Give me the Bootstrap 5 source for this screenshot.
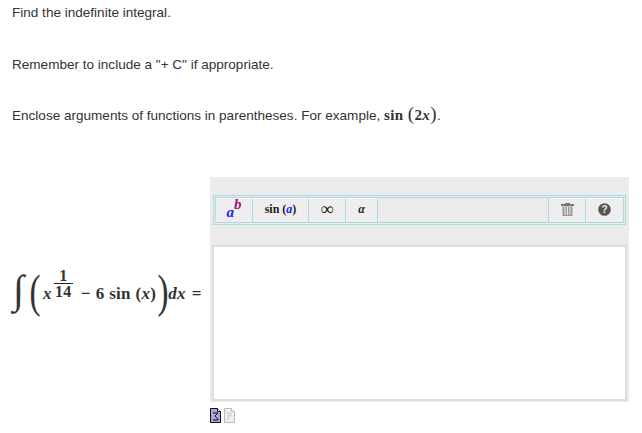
<!DOCTYPE html>
<html lang="en">
<head>
  <meta charset="UTF-8">
  <title>Indefinite integral</title>
  <link href="https://cdn.jsdelivr.net/npm/bootstrap@5.3.0/dist/css/bootstrap.min.css" rel="stylesheet">
  <style>
    body {
      background: #fff;
      color: #333;
      font-family: "Liberation Sans", Arial, sans-serif;
      font-size: 13.55px;
      line-height: 20px;
      overflow: hidden;
    }
    .page-wrap { padding: 3px 12px 0 12px; width: 642px; }
    .prompt-line { margin: 0 0 32px 0; height: 20px; white-space: nowrap; }
    .prompt-tight { margin-bottom: 29px; }
    .tex { font-family: "Liberation Serif", serif; color: #222; }
    .tex-inline { font-size: 15px; font-weight: 700; line-height: 1; letter-spacing: .4px; color: #333; }
    .tex-big { font-size: 19px; font-weight: 400; line-height: 1; }
    .answer-row { margin-top: 53px; margin-left: -12px; }
    .math-col { width: 210px; height: 225px; padding: 87px 0 0 13px; }
    .math-line { font-size: 17px; font-weight: 700; height: 60px; white-space: nowrap; letter-spacing: .3px; color: #333; }
    .tex-int { font-size: 40px; font-weight: 400; font-style: italic; width: 14px; margin-top: -8px; }
    .tex-paren { font-size: 46px; font-weight: 400; line-height: 48px; transform: scaleX(.72); width: 11px; margin-top: -5px; }
    .tex-paren-open { margin-left: 1px; margin-right: 4px; }
    .tex-paren-close { margin-right: 1px; }
    .tex-frac { width: 19px; margin: -21px 8px 0 2px; line-height: 16px; }
    .tex-num { border-bottom: 1px solid #222; text-align: center; font-size: 16px; height: 15px; line-height: 14px; }
    .tex-den { text-align: center; font-size: 16px; height: 15px; line-height: 15px; }
    .tex-minus { margin-right: 5px; }
    .tex-eq { margin-left: 6px; }
    .editor-panel { width: 419px; height: 225px; background: #ebebeb; padding: 18px 3px 2px 3px; }
    .tool-outer { border: 1px solid #add8e6; padding: 1px; height: 30px; }
    .tool-inner { height: 26px; border: 1px solid #add8e6; background: #eee; }
    .tool-btn { height: 100%; border-right: 1px solid #add8e6; border-top: 1px solid #f8f8f8; font-family: "Liberation Serif", serif; font-weight: 700; color: #222; font-size: 12px; padding-bottom: 2px; }
    .tool-txt { padding-bottom: 4px; }
    .tool-btn.last-btn { border-right: 0; }
    .tool-spacer { border-right: 1px solid #add8e6; height: 100%; background: #ebebeb; }
    .tool-w37 { width: 37px; }
    .tool-w56 { width: 56px; }
    .tool-w32 { width: 32px; }
    .var-a { color: #2222ee; font-style: italic; }
    .var-b { color: #a0157a; font-style: italic; }
    .sup-b { font-size: 15px; position: relative; top: -5px; }
    .base-a { font-size: 15px; position: relative; top: 3px; }
    .infty-glyph { font-size: 18px; font-weight: 400; }
    .editor-box { height: 156px; margin-top: 20px; background: #fff; border: 2px solid #ddd; margin-left: -1px; margin-right: -1px; }
    .file-icons { margin: 6px 0 0 198px; gap: 3px; }
  </style>
</head>
<body>
<div class="page-wrap">
  <p class="prompt-line">Find the indefinite integral.</p>
  <p class="prompt-line prompt-tight">Remember to include a "+ C" if appropriate.</p>
  <p class="prompt-line">Enclose arguments of functions in parentheses. For example, <span class="tex tex-inline">sin <span class="tex-big">(</span>2<i>x</i><span class="tex-big">)</span></span>.</p>

  <div class="answer-row d-flex">
    <div class="math-col">
      <div class="math-line tex d-flex align-items-center">
        <span class="tex-int">∫</span>
        <span class="tex-paren tex-paren-open">(</span>
        <i>x</i>
        <span class="tex-frac">
          <div class="tex-num">1</div>
          <div class="tex-den">14</div>
        </span>
        <span class="tex-minus">−</span>
        <span>6 sin (<i>x</i>)</span>
        <span class="tex-paren tex-paren-close">)</span>
        <span><i>dx</i></span>
        <span class="tex-eq">=</span>
      </div>
    </div>
    <div class="editor-panel">
      <div class="tool-outer">
        <div class="tool-inner d-flex">
          <div class="tool-btn tool-txt tool-w37 d-flex align-items-center justify-content-center"><span class="var-a base-a">a</span><span class="var-b sup-b">b</span></div>
          <div class="tool-btn tool-txt tool-w56 d-flex align-items-center justify-content-center"><span>sin&nbsp;(<span class="var-a">a</span>)</span></div>
          <div class="tool-btn tool-txt tool-w37 d-flex align-items-center justify-content-center"><span class="infty-glyph">∞</span></div>
          <div class="tool-btn tool-txt tool-w32 d-flex align-items-center justify-content-center"><i>α</i></div>
          <div class="tool-spacer flex-grow-1"></div>
          <div class="tool-btn tool-w37 d-flex align-items-center justify-content-center">
            <svg width="13" height="13" viewBox="0 0 13 13"><rect x="0" y="1" width="13" height="2" fill="#777"/><rect x="4" y="0" width="5" height="1" fill="#777"/><path d="M1.5 3.5h10V13h-10z" fill="#999"/><path d="M4 4v8M6.5 4v8M9 4v8" stroke="#eee" stroke-width="1"/></svg>
          </div>
          <div class="tool-btn last-btn tool-w37 d-flex align-items-center justify-content-center">
            <svg width="13" height="13" viewBox="0 0 13 13"><circle cx="6.5" cy="6.5" r="6.3" fill="#555"/><text x="6.5" y="10" text-anchor="middle" font-family="Liberation Sans" font-size="10" font-weight="700" fill="#eee">?</text></svg>
          </div>
        </div>
      </div>
      <div class="editor-box"></div>
    </div>
  </div>

  <div class="file-icons d-flex">
    <svg width="11" height="15" viewBox="0 0 11 15"><path d="M.5.5h7l3 3v11H.5z" fill="#aaa8e0" stroke="#111"/><path d="M7.5.5v3h3" fill="#fff" stroke="#111"/><path d="M3 5h5L5 8l3 3v1H3" fill="none" stroke="#111"/></svg>
    <svg width="11" height="15" viewBox="0 0 11 15"><path d="M.5.5h7l3 3v11H.5z" fill="#eeeef6" stroke="#bbb"/><path d="M7.5.5v3h3" fill="#fff" stroke="#bbb"/><path d="M4 12V5h3v3H4" fill="none" stroke="#ccc"/></svg>
  </div>
</div>
</body>
</html>
